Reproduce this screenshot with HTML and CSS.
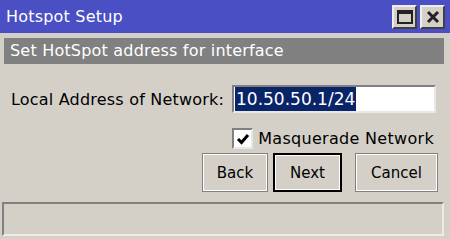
FILE: index.html
```html
<!DOCTYPE html>
<html lang="en">
<head>
    <meta charset="UTF-8">
    <title>Hotspot Setup</title>
    <link rel="stylesheet" href="styles.css">
</head>
<body>

<!-- Title bar -->
<div class="titlebar">
  <span class="title">Hotspot Setup</span>
  <div class="win-buttons">
    <div class="win-btn">
      <svg width="16" height="14" viewBox="0 0 16 14"><rect x="1" y="1" width="14" height="12" fill="none" stroke="#222" stroke-width="2"/><rect x="1" y="1" width="14" height="3" fill="#222"/></svg>
    </div>
    <div class="win-btn">
      <svg width="14" height="14" viewBox="0 0 14 14"><path d="M2 2 L12 12 M12 2 L2 12" stroke="#222" stroke-width="3"/></svg>
    </div>
  </div>
</div>

<div class="content">
  <div class="section">Set HotSpot address for interface</div>

  <div class="field-row">
    <label class="field-label">Local Address of Network:</label>
    <div class="input"><span class="selected">10.50.50.1/24</span></div>
  </div>

  <div class="check-row">
    <div class="checkbox">
      <svg width="14" height="14" viewBox="0 0 14 14"><path d="M2 7 L5.5 10.5 L12 3" fill="none" stroke="#000" stroke-width="3"/></svg>
    </div>
    <span>Masquerade Network</span>
  </div>

  <div class="button-row">
    <button class="btn">Back</button>
    <button class="btn default">Next</button>
    <button class="btn wide">Cancel</button>
  </div>

  <div class="status"></div>
</div>

</body>
</html>
```

FILE: styles.css
```css
html, body {
  margin: 0;
  width: 450px;
  height: 239px;
  overflow: hidden;
  background: #d4d0c8;
  font-family: 'DejaVu Sans', sans-serif;
  color: #000;
}

/* Title bar */
.titlebar {
  height: 33px;
  background: #4a4fc3;
  display: flex;
  align-items: center;
  justify-content: space-between;
  padding: 0 5px 0 6px;
}
.title {
  color: #fff;
  font-size: 16px;
  letter-spacing: 0.2px;
}
.win-buttons {
  display: flex;
  gap: 3px;
}
.win-btn {
  width: 21px;
  height: 20px;
  background: #d4d0c8;
  border: 2px solid #404040;
  border-top-color: #eee;
  border-left-color: #eee;
  display: flex;
  align-items: center;
  justify-content: center;
}

.content {
  padding: 0 6px 0 2px;
}

/* Section header */
.section {
  margin: 5px 0 0 2px;
  height: 26px;
  background: #808080;
  color: #fff;
  font-size: 16px;
  letter-spacing: 0.2px;
  line-height: 26px;
  padding-left: 6px;
}

.field-row {
  display: flex;
  align-items: center;
  justify-content: space-between;
  margin-top: 21px;
  padding-left: 9px;
  padding-right: 8px;
  font-size: 16px;
  letter-spacing: 0.2px;
}
.input {
  width: 199px;
  height: 24px;
  background: #fff;
  border: 2px solid #808080;
  border-right-color: #e8e8e8;
  border-bottom-color: #e8e8e8;
  display: flex;
  align-items: center;
  padding-left: 1px;
  letter-spacing: 0;
}
.selected {
  background: #0a246a;
  color: #fff;
  font-size: 17px;
  padding: 2px 1px;
}

.check-row {
  display: flex;
  align-items: center;
  justify-content: flex-end;
  gap: 5px;
  margin-top: 15px;
  padding-right: 10px;
  font-size: 16px;
  letter-spacing: 0.3px;
}
.checkbox {
  width: 17px;
  height: 17px;
  background: #fff;
  border: 2px solid #808080;
  border-right-color: #e8e8e8;
  border-bottom-color: #e8e8e8;
  display: flex;
  align-items: center;
  justify-content: center;
}

.button-row {
  display: flex;
  justify-content: flex-end;
  gap: 5px;
  margin-top: 4px;
  padding-right: 6px;
}
.btn {
  height: 39px;
  width: 66px;
  background: #d4d0c8;
  border: 1px solid #808080;
  box-shadow: inset 1px 1px 0 #fff, inset -1px -1px 0 #fff;
  font-family: 'DejaVu Sans', sans-serif;
  font-size: 15px;
  color: #000;
  padding: 0;
}
.btn.default {
  width: 69px;
  border: 2px solid #000;
}
.btn.wide {
  width: 83px;
  margin-left: 8px;
}

/* Status bar */
.status {
  margin-top: 10px;
  height: 30px;
  border: 2px solid #808080;
  border-right-color: #ecebe6;
  border-bottom-color: #ecebe6;
}
```
